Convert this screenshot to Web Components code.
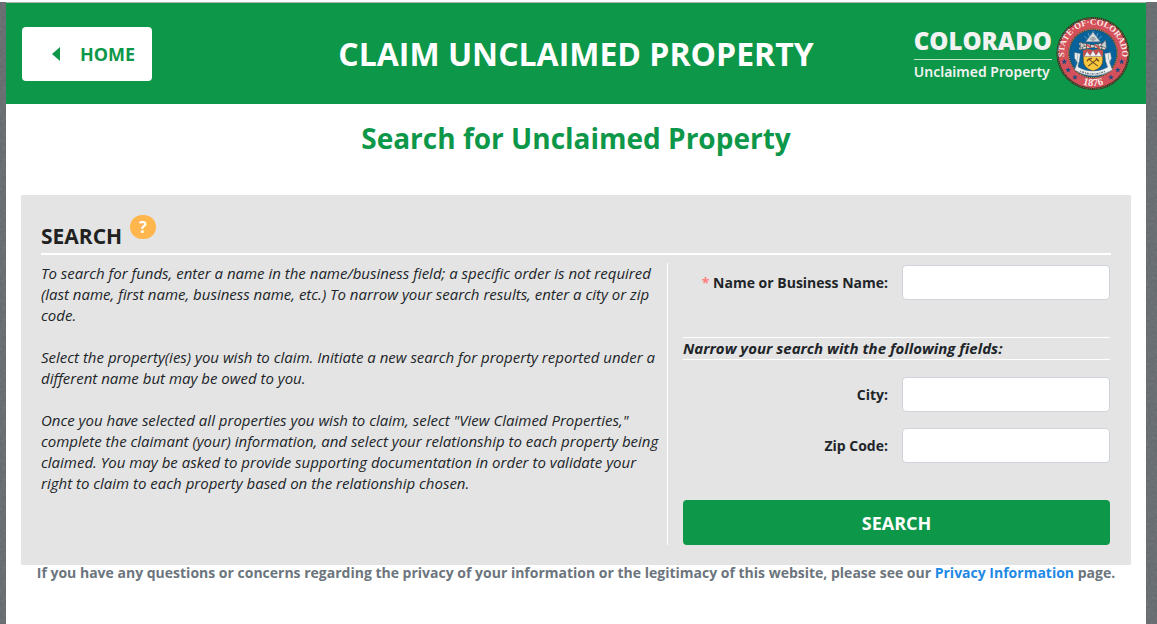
<!DOCTYPE html>
<html lang="en">
<head>
<meta charset="utf-8">
<meta name="viewport" content="width=device-width, initial-scale=1">
<title>Claim Unclaimed Property</title>
<style>
  body {
    margin: 0;
    min-height: 100vh;
    box-sizing: border-box;
    padding: 0 11px 0 6px;
    display: flex;
    border-top: 2px solid #fff;
    font: 14px/21px "Open Sans", "Noto Sans", sans-serif;
    color: #212529;
    background: #63686d url("data:image/svg+xml,%3Csvg xmlns='http://www.w3.org/2000/svg' width='160' height='160'%3E%3Cfilter id='n'%3E%3CfeTurbulence type='fractalNoise' baseFrequency='.35' numOctaves='3' stitchTiles='stitch'/%3E%3CfeColorMatrix type='saturate' values='0'/%3E%3C/filter%3E%3Crect width='160' height='160' filter='url(%23n)' opacity='.16'/%3E%3C/svg%3E");
    --green: #0d9749;
  }
  claim-page { flex: 1; min-width: 0; }
</style>
</head>
<body>
<claim-page>
  <page-header slot="header" heading="CLAIM UNCLAIMED PROPERTY">
    <home-button slot="start">HOME</home-button>
    <state-logo slot="end"></state-logo>
  </page-header>
  <span slot="title">Search for Unclaimed Property</span>
  <search-panel heading="SEARCH">
    <p slot="help">To search for funds, enter a name in the name/business field; a specific order is not required (last name, first name, business name, etc.) To narrow your search results, enter a city or zip code.</p>
    <p slot="help">Select the property(ies) you wish to claim. Initiate a new search for property reported under a different name but may be owed to you.</p>
    <p slot="help">Once you have selected all properties you wish to claim, select "View Claimed Properties," complete the claimant (your) information, and select your relationship to each property being claimed. You may be asked to provide supporting documentation in order to validate your right to claim to each property based on the relationship chosen.</p>
    <search-form></search-form>
  </search-panel>
  <privacy-note slot="footer"></privacy-note>
</claim-page>

<script>
class BaseElement extends HTMLElement {
  constructor() {
    super();
    this.attachShadow({mode: 'open'});
  }

  connectedCallback() {
    this.shadowRoot.innerHTML = this.template;
  }
}

customElements.define('claim-page', class ClaimPage extends BaseElement {
  get template() {
    return `<style>
      :host {
        display: block;
        background: #fff;
        border-top: 1px solid #b4b4b4;
      }
      h2 {
        margin: 0;
        padding: 16px 15px 39px;
        font-size: 28px;
        line-height: 36px;
        font-weight: 700;
        text-align: center;
        color: var(--green);
      }
      main { padding: 0 15px; }
    </style>
    <slot name="header"></slot>
    <h2><slot name="title"></slot></h2>
    <main>
      <slot></slot>
      <slot name="footer"></slot>
    </main>`
  }
});

customElements.define('page-header', class PageHeader extends BaseElement {
  get template() {
    return `<style>
      :host {
        display: grid;
        grid-template-columns: 1fr auto 1fr;
        align-items: center;
        padding: 12px 16px;
        background: var(--green);
        color: #fff;
      }
      h1 {
        margin: 0;
        font-size: 32px;
        line-height: 40px;
        font-weight: 700;
        text-align: center;
      }
      .end { justify-self: end; }
    </style>
    <div><slot name="start"></slot></div>
    <h1>${this.getAttribute('heading')}</h1>
    <div class="end"><slot name="end"></slot></div>`
  }
});

customElements.define('home-button', class HomeButton extends BaseElement {
  get template() {
    return `<style>
      :host { display: flex; }
      button {
        display: flex;
        align-items: center;
        gap: 20px;
        height: 54px;
        padding: 0 17px 0 30px;
        border: 0;
        border-radius: 4px;
        background: #fff;
        color: var(--green);
        font: 700 18px/24px "Open Sans", sans-serif;
        cursor: pointer;
      }
      svg { display: block; fill: currentColor; }
    </style>
    <button type="button">
      <svg width="8" height="14" viewBox="0 0 8 14" aria-hidden="true"><path d="M8 0v14L0 7z"/></svg>
      <slot></slot>
    </button>`
  }
});

customElements.define('state-logo', class StateLogo extends BaseElement {
  get template() {
    return `<style>
      :host {
        display: flex;
        align-items: center;
        gap: 4px;
        color: #f2f2f2;
      }
      .name {
        font-size: 24px;
        line-height: 36px;
        font-weight: 800;
        border-bottom: 1px solid #c4e4d1;
      }
      .unit {
        font-size: 14px;
        line-height: 24px;
        font-weight: 600;
        font-family: "Noto Sans", sans-serif;
      }
    </style>
    <div>
      <div class="name">COLORADO</div>
      <div class="unit">Unclaimed Property</div>
    </div>
    <state-seal></state-seal>`
  }
});

customElements.define('state-seal', class StateSeal extends BaseElement {
  get template() {
    return `<style>
      :host { display: block; }
      svg { display: block; }
      text {
        font-family: "Liberation Serif", serif;
        font-weight: 700;
        fill: #fbe9e6;
        text-anchor: middle;
      }
    </style>
    <svg width="74" height="77" viewBox="-38 -38 76 76" role="img" aria-label="State seal">
      <defs>
        <path id="top" d="M-27.5 11A29.6 29.6 0 1 1 27.5 11"/>
        <path id="bottom" d="M-20 27A33.6 33.6 0 0 0 20 27"/>
        <path id="star" d="M0-3l.8 2h2.1L1.2.3l.6 2.2L0 1.3l-1.8 1.2.6-2.2L-2.9-1h2.1z"/>
      </defs>
      <circle r="37.5" fill="#2e3027"/>
      <circle r="36.3" fill="none" stroke="#a88f4f" stroke-width="1" stroke-dasharray="1 1"/>
      <circle r="35.4" fill="#d4505a"/>
      <circle r="25.6" fill="#4b3b30"/>
      <circle r="24.9" fill="none" stroke="#e3c684" stroke-width="1" stroke-dasharray="1 1"/>
      <circle r="24.2" fill="#07629b"/>
      <text font-size="9"><textPath href="#top" startOffset="50%">STATE·OF·COLORADO</textPath></text>
      <text font-size="11"><textPath href="#bottom" startOffset="50%">1876</textPath></text>
      <g fill="#164a82">
        <use href="#star" x="-29.5" y="8.5"/><use href="#star" x="-25.5" y="17"/><use href="#star" x="-18.5" y="24.5"/>
        <use href="#star" x="29.5" y="8.5"/><use href="#star" x="25.5" y="17"/><use href="#star" x="18.5" y="24.5"/>
      </g>
      <!-- eye and rays -->
      <path d="M0-23V-12M-5-21l3 8M5-21l-3 8M-9-18l6 6M9-18l-6 6" stroke="#8fb3c8" stroke-width=".7"/>
      <path d="M0-22l7.5 10h-15z" fill="#d5dadd" stroke="#667780" stroke-width=".6"/>
      <ellipse cy="-15" rx="2.4" ry="1.3" fill="#fff" stroke="#34434b" stroke-width=".6"/>
      <circle cy="-15" r=".7" fill="#24323a"/>
      <!-- fasces -->
      <path d="M-14-10l27 5M-14-5l27-5" stroke="#5d5350" stroke-width="3"/>
      <path d="M-14-10l27 5M-14-5l27-5" stroke="#dedbd3" stroke-width="2" stroke-dasharray="3 1"/>
      <path d="M-13-12l5 4-5 3zM8-8l5-6 1 9z" fill="#c8cdd0" stroke="#444" stroke-width=".5"/>
      <path d="M-7-9l5 3M2-9l5 4" stroke="#c8464c" stroke-width="1.5"/>
      <!-- shield -->
      <path d="M-10-3q5-2 10 0 5-2 10 0V7q0 8-10 11Q-10 15-10 7z" fill="#f7c73c" stroke="#6c4b26" stroke-width=".7"/>
      <path d="M-10-3q5-2 10 0 5-2 10 0v6h-20z" fill="#c94b50"/>
      <path d="M-9 3l3-5 3 4 3-5 3 5 3-4 3 5z" fill="#f4f5f5" stroke="#596b76" stroke-width=".4"/>
      <path d="M-5 13L4 6M5 13L-4 6" stroke="#6a4a26" stroke-width="1.1"/>
      <path d="M-6 8q1-3 5-3M3 5l3 3" stroke="#6a4a26" stroke-width="1.5" fill="none"/>
      <!-- motto ribbon -->
      <path d="M-19-1l6 1-1 8q-2 5-1 6 15 8 30 0l-2-6-1-8 6-1 1 6-2 4 3 8Q0 29-19 17l3-8-3-4z" fill="#eceeee" stroke="#566c7b" stroke-width=".5"/>
      <path d="M-16 0v6l-2 3M16 0v6l2 3" stroke="#91a4ae" stroke-width=".7" fill="none"/>
      <path d="M-13 18q13 6 26 0" stroke="#64717a" stroke-width="1.4" stroke-dasharray="1 1 2 1" fill="none"/>
    </svg>`
  }
});

customElements.define('search-panel', class SearchPanel extends BaseElement {
  get template() {
    return `<style>
      :host {
        display: block;
        padding: 20px;
        background: #e4e4e4;
      }
      header {
        display: flex;
        align-items: flex-start;
        gap: 8px;
        height: 38px;
        border-bottom: 2px solid #fff;
      }
      h3 {
        margin: 0;
        align-self: flex-end;
        font-size: 21px;
        line-height: 34px;
        font-weight: 700;
        color: #212121;
      }
      .help {
        width: 26px;
        height: 24px;
        padding: 0;
        border: 0;
        border-radius: 12px;
        background: #ffb74d;
        color: #fff;
        font: 700 16px/24px "Open Sans", sans-serif;
        cursor: pointer;
      }
      .columns {
        display: grid;
        grid-template-columns: minmax(0, 1fr) 40%;
        column-gap: 15px;
        padding-top: 8px;
      }
      .text {
        padding-right: 5px;
        border-right: 1px solid #fff;
        font-size: 15px;
        font-style: italic;
      }
      ::slotted(p) { margin: 0 0 21px; }
    </style>
    <header>
      <h3>${this.getAttribute('heading')}</h3>
      <button class="help" type="button" aria-label="Help">?</button>
    </header>
    <div class="columns">
      <div class="text"><slot name="help"></slot></div>
      <slot></slot>
    </div>`
  }
});

customElements.define('search-form', class SearchForm extends BaseElement {
  get template() {
    return `<style>
      :host { display: block; padding: 2px 1px 0 0; }
      form {
        display: grid;
        grid-template-columns: minmax(0, 1fr) minmax(0, 1fr);
        column-gap: 11px;
        row-gap: 16px;
        align-items: center;
      }
      label {
        padding-right: 3px;
        text-align: right;
        font-weight: 700;
      }
      .required { color: #ff7f7f; }
      input {
        box-sizing: border-box;
        width: 100%;
        height: 35px;
        padding: 6px 12px;
        border: 1px solid #ced4da;
        border-radius: 4px;
        background: #fff;
        font: inherit;
      }
      .narrow {
        grid-column: 1 / -1;
        margin: 21px 0 1px;
        border: solid #fff;
        border-width: 1px 0;
        font-size: 15px;
        font-weight: 700;
        font-style: italic;
      }
      button {
        grid-column: 1 / -1;
        height: 45px;
        margin-top: 21px;
        border: 0;
        border-radius: 4px;
        background: var(--green);
        color: #fff;
        font: 700 18px/24px "Open Sans", sans-serif;
        cursor: pointer;
      }
    </style>
    <form>
      <label for="name"><span class="required">*</span> Name or Business Name:</label>
      <input id="name" type="text" required>
      <div class="narrow">Narrow your search with the following fields:</div>
      <label for="city">City:</label>
      <input id="city" type="text">
      <label for="zip">Zip Code:</label>
      <input id="zip" type="text">
      <button type="submit">SEARCH</button>
    </form>`
  }

  connectedCallback() {
    super.connectedCallback();
    this.shadowRoot.querySelector('form').addEventListener('submit', event => event.preventDefault());
  }
});

customElements.define('privacy-note', class PrivacyNote extends BaseElement {
  get template() {
    return `<style>
      :host {
        display: block;
        line-height: 16px;
        font-weight: 700;
        text-align: center;
        color: #6c757d;
      }
      a { color: #1e88e5; text-decoration: none; }
    </style>
    If you have any questions or concerns regarding the privacy of your information or the legitimacy of this website, please see our <a href="#privacy">Privacy Information</a> page.`
  }
});
</script>
</body>
</html>
